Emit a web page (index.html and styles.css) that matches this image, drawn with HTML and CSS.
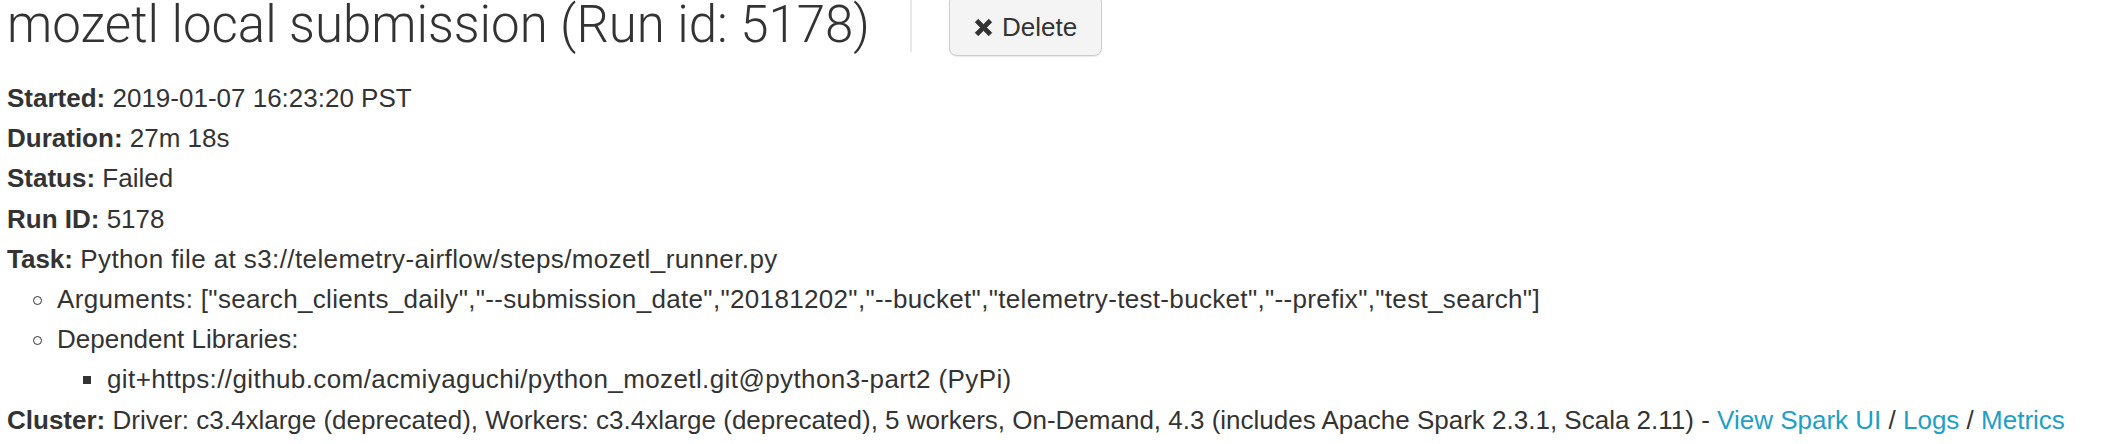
FILE: index.html
```html
<!DOCTYPE html>
<html>
<head>
<meta charset="utf-8">
<link rel="stylesheet" href="styles.css">
</head>
<body>
<div class="page">
  <div class="title-row">
    <h1 class="title">mozetl local submission (Run id: 5178)</h1>
    <div class="sep"></div>
    <button class="btn-delete"><svg class="x-icon" viewBox="0 0 16 16" width="19" height="19"><path d="M1 3.6 3.6 1 8 5.4 12.4 1 15 3.6 10.6 8 15 12.4 12.4 15 8 10.6 3.6 15 1 12.4 5.4 8Z" fill="#333" stroke="#333" stroke-width="0.6" stroke-linejoin="round"/></svg><span>Delete</span></button>
  </div>
  <div class="details">
    <div class="row"><b>Started:</b> 2019-01-07 16:23:20 PST</div>
    <div class="row"><b>Duration:</b> 27m 18s</div>
    <div class="row"><b>Status:</b> Failed</div>
    <div class="row"><b>Run ID:</b> 5178</div>
    <div class="row"><b>Task:</b> <span class="wide">Python file at s3://telemetry-airflow/steps/mozetl_runner.py</span></div>
    <ul class="list-l1">
      <li class="row"><span class="wide-args">Arguments: ["search_clients_daily","--submission_date","20181202","--bucket","telemetry-test-bucket","--prefix","test_search"]</span></li>
      <li class="row">Dependent Libraries:</li>
    </ul>
    <ul class="list-l2">
      <li class="row"><span class="wide">git+https://github.com/acmiyaguchi/python_mozetl.git@python3-part2 (PyPi)</span></li>
    </ul>
    <div class="row"><b>Cluster:</b> Driver: c3.4xlarge (deprecated), Workers: c3.4xlarge (deprecated), 5 workers, On-Demand, 4.3 (includes Apache Spark 2.3.1, Scala 2.11) - <a href="#">View Spark UI</a> / <a href="#">Logs</a> / <a href="#">Metrics</a></div>
  </div>
</div>
</body>
</html>
```

FILE: styles.css
```css
html, body {
  margin: 0;
  padding: 0;
  background: #fff;
}
body {
  font-family: "Liberation Sans", Arial, sans-serif;
  color: #333;
  font-size: 26px;
}
.page {
  padding-left: 7px;
}
.title-row {
  display: flex;
  align-items: flex-start;
  height: 78px;
}
.title {
  margin: 0;
  font-family: Roboto, "Liberation Sans", sans-serif;
  font-weight: 300;
  font-size: 51px;
  line-height: 51px;
  margin-top: -1px;
  color: #333;
  white-space: nowrap;
}
.sep {
  width: 2px;
  height: 52px;
  background: #e8e8e8;
  margin-left: 40px;
}
.btn-delete {
  margin-left: 37px;
  margin-top: -6px;
  height: 62px;
  padding: 4px 24px 0;
  border: 1px solid #ccc;
  border-radius: 8px;
  background: #f4f4f4;
  box-shadow: 0 1px 1px rgba(0,0,0,0.08);
  display: flex;
  align-items: center;
  gap: 9px;
  font-family: "Liberation Sans", Arial, sans-serif;
  font-size: 26px;
  color: #333;
}
.x-icon {
  display: block;
}
.details .row {
  height: 40.2px;
  line-height: 40px;
  white-space: nowrap;
}
.details b {
  font-weight: 700;
}
.wide {
  letter-spacing: 0.4px;
}
.wide-args {
  letter-spacing: 0.33px;
}
ul {
  margin: 0;
  padding: 0;
  list-style: none;
}
.list-l1 .row {
  padding-left: 26px;
  display: flex;
  align-items: center;
}
.list-l1 .row::before {
  content: "";
  width: 7px;
  height: 7px;
  border: 1px solid #333;
  border-radius: 50%;
  margin-right: 15px;
  margin-top: 2px;
}
.list-l2 .row {
  padding-left: 76px;
  display: flex;
  align-items: center;
}
.list-l2 .row::before {
  content: "";
  width: 8px;
  height: 8px;
  background: #333;
  margin-right: 16px;
  margin-top: 2px;
}
a {
  color: #1d9fc7;
  text-decoration: none;
}
```
